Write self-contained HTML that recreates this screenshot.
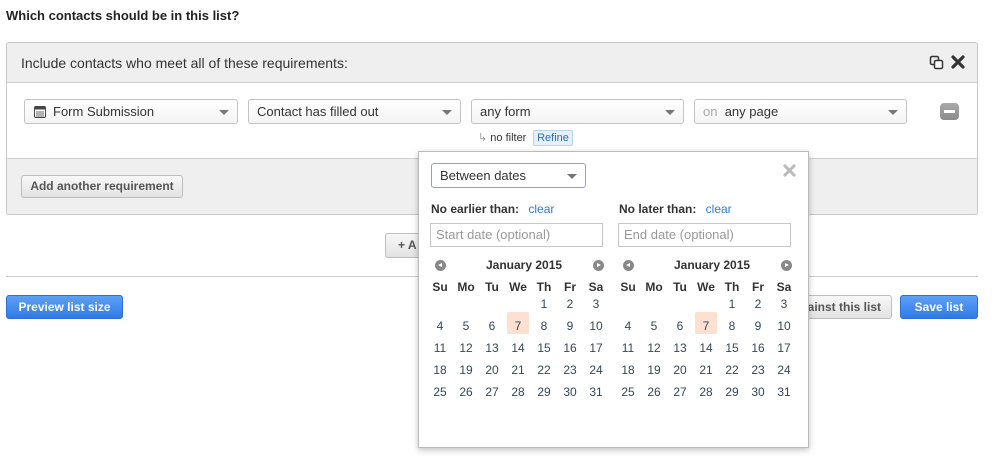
<!DOCTYPE html>
<html><head><style>
*{box-sizing:border-box;margin:0;padding:0}
body{width:992px;height:463px;background:#fff;font-family:"Liberation Sans",Arial,sans-serif;color:#333;position:relative;overflow:hidden;font-size:13px}
.a{position:absolute;white-space:nowrap}
.sel{position:absolute;height:25px;border:1px solid #c4c4c4;border-radius:3px;background:linear-gradient(#fff,#f4f4f4);font-size:13px;line-height:23px;padding-left:8px;color:#333;white-space:nowrap}
.sel:after{content:"";position:absolute;right:8px;top:10px;border-left:5px solid transparent;border-right:5px solid transparent;border-top:5px solid #777}
.btn{position:absolute;border:1px solid #bdbdbd;border-radius:3px;background:linear-gradient(#f8f8f8,#e2e2e2);font-weight:bold;font-size:12px;color:#555;text-align:center;white-space:nowrap;overflow:hidden}
.blue{position:absolute;border:1px solid #2d6fd6;border-radius:3px;background:linear-gradient(#5ea0f4,#2f7ae8);color:#fff;font-weight:bold;font-size:12px;text-align:center;line-height:22px;white-space:nowrap}
.inp{position:absolute;height:24px;border:1px solid #c8c8c8;color:#999;font-size:13px;line-height:22px;padding-left:5px}
.d{position:absolute;width:26px;text-align:center;font-size:12px;color:#33475b}
.h{position:absolute;width:26px;text-align:center;font-size:12px;font-weight:bold;color:#333}
.arr{position:absolute;width:11px;height:11px;border-radius:50%;background:#888}
.arr:after{content:"";position:absolute;top:3px;border-top:2.5px solid transparent;border-bottom:2.5px solid transparent}
.al:after{left:3px;border-right:4px solid #fff}
.ar:after{left:4px;border-left:4px solid #fff}
</style></head><body>
<div class="a" style="left:6px;top:8px;font-weight:bold;font-size:13px;color:#222">Which contacts should be in this list?</div>
<div class="a" style="left:6px;top:42px;width:972px;height:173px;border:1px solid #c8c8c8;border-radius:3px;background:#efefef;overflow:hidden">
 <div class="a" style="left:0;top:39px;width:970px;height:77px;background:#fff;border-top:1px solid #cfcfcf;border-bottom:1px solid #cfcfcf"></div>
 <div class="a" style="left:14px;top:12px;font-size:14px;color:#333">Include contacts who meet all of these requirements:</div>
 <svg class="a" style="left:922px;top:12px" width="16" height="16" viewBox="0 0 16 16"><rect x="1.5" y="1.5" width="8" height="8" rx="1.5" fill="none" stroke="#333" stroke-width="1.5"/><rect x="5.5" y="5.5" width="8" height="8" rx="1.5" fill="#fff" stroke="#333" stroke-width="1.5"/></svg>
 <svg class="a" style="left:944px;top:12px" width="14" height="14" viewBox="0 0 14 14"><path d="M2 2L12 12M12 2L2 12" stroke="#333" stroke-width="3.2" stroke-linecap="round"/></svg>
</div>
<div class="sel" style="left:24px;top:99px;width:214px;padding-left:28px"><svg class="a" style="left:9px;top:6px" width="12" height="12" viewBox="0 0 12 12"><rect x="0.5" y="0.5" width="11" height="11" rx="1.5" fill="#fff" stroke="#444"/><rect x="0.5" y="0.5" width="11" height="3" fill="#444"/><path d="M2 6H10M2 8H10M2 10H10" stroke="#666" stroke-width="1"/></svg>Form Submission</div>
<div class="sel" style="left:248px;top:99px;width:213px">Contact has filled out</div>
<div class="sel" style="left:471px;top:99px;width:213px">any form</div>
<div class="sel" style="left:694px;top:99px;width:213px"><span style="color:#aaa">on</span>&nbsp; any page</div>
<div class="a" style="left:940px;top:103px;width:19px;height:17px;border-radius:4px;background:linear-gradient(#aaa,#8a8a8a)"><div class="a" style="left:4px;top:7px;width:11px;height:3px;background:#fff"></div></div>
<div class="a" style="left:478px;top:131px;font-size:11px;color:#333"><span style="color:#999">↳</span> no filter</div>
<div class="a" style="left:533px;top:130px;width:40px;height:16px;border:1px solid #b8d4f0;background:#e6f0fb;border-radius:2px;font-size:11px;color:#2a6ebd;text-align:center;line-height:14px">Refine</div>
<div class="btn" style="left:21px;top:175px;width:162px;height:23px;line-height:21px">Add another requirement</div>
<div class="btn" style="left:385px;top:233px;width:60px;height:25px;line-height:23px;text-align:left;padding-left:12px">+ A</div>
<div class="a" style="left:6px;top:276px;width:972px;height:1px;background:#ccc"></div>
<div class="blue" style="left:6px;top:295px;width:117px;height:24px">Preview list size</div>
<div class="btn" style="left:740px;top:295px;width:152px;height:24px;line-height:22px;text-align:right;padding-right:10px">Filter against this list</div>
<div class="blue" style="left:900px;top:295px;width:78px;height:24px">Save list</div>

<div class="a" style="left:418px;top:151px;width:391px;height:297px;background:#fff;border:1px solid #bbb;box-shadow:0 2px 6px rgba(0,0,0,.25)">
 <div class="sel" style="left:12px;top:11px;width:155px;border-color:#7aa7e0;background:#fff;font-size:13px">Between dates</div>
 <svg class="a" style="left:364px;top:12px" width="13" height="13" viewBox="0 0 14 14"><path d="M2 2L12 12M12 2L2 12" stroke="#bbb" stroke-width="3.2" stroke-linecap="round"/></svg>
 <div class="a" style="left:12px;top:50px;font-size:12px;font-weight:bold;color:#333">No earlier than: <span style="font-weight:normal;color:#2a7bd8;margin-left:6px">clear</span></div>
 <div class="a" style="left:200px;top:50px;font-size:12px;font-weight:bold;color:#333">No later than: <span style="font-weight:normal;color:#2a7bd8;margin-left:6px">clear</span></div>
 <div class="inp" style="left:11px;top:71px;width:173px">Start date (optional)</div>
 <div class="inp" style="left:199px;top:71px;width:173px">End date (optional)</div>
</div>
<div id="cals"></div>
<script>
var out='';
[0,188].forEach(function(o){
 var L=427+o;
 out+='<div class="arr al" style="left:'+(L+8)+'px;top:260px"></div><div class="arr ar" style="left:'+(L+166)+'px;top:260px"></div>';
 out+='<div class="a" style="left:'+(L+59)+'px;top:258px;font-size:12px;font-weight:bold;color:#333">January 2015</div>';
 ['Su','Mo','Tu','We','Th','Fr','Sa'].forEach(function(n,i){out+='<div class="h" style="left:'+(L+i*26)+'px;top:280px">'+n+'</div>';});
 for(var d=1;d<=31;d++){var p=d+3,c=p%7,r=Math.floor(p/7);
  var x=L+c*26,y=297+r*22;
  if(d==7)out+='<div class="a" style="left:'+(x+2)+'px;top:'+(y-7)+'px;width:22px;height:22px;background:#fde0cf;border-radius:2px"></div>';
  out+='<div class="d" style="left:'+x+'px;top:'+y+'px">'+d+'</div>';}
});
document.getElementById('cals').innerHTML=out;
</script>
</body></html>
